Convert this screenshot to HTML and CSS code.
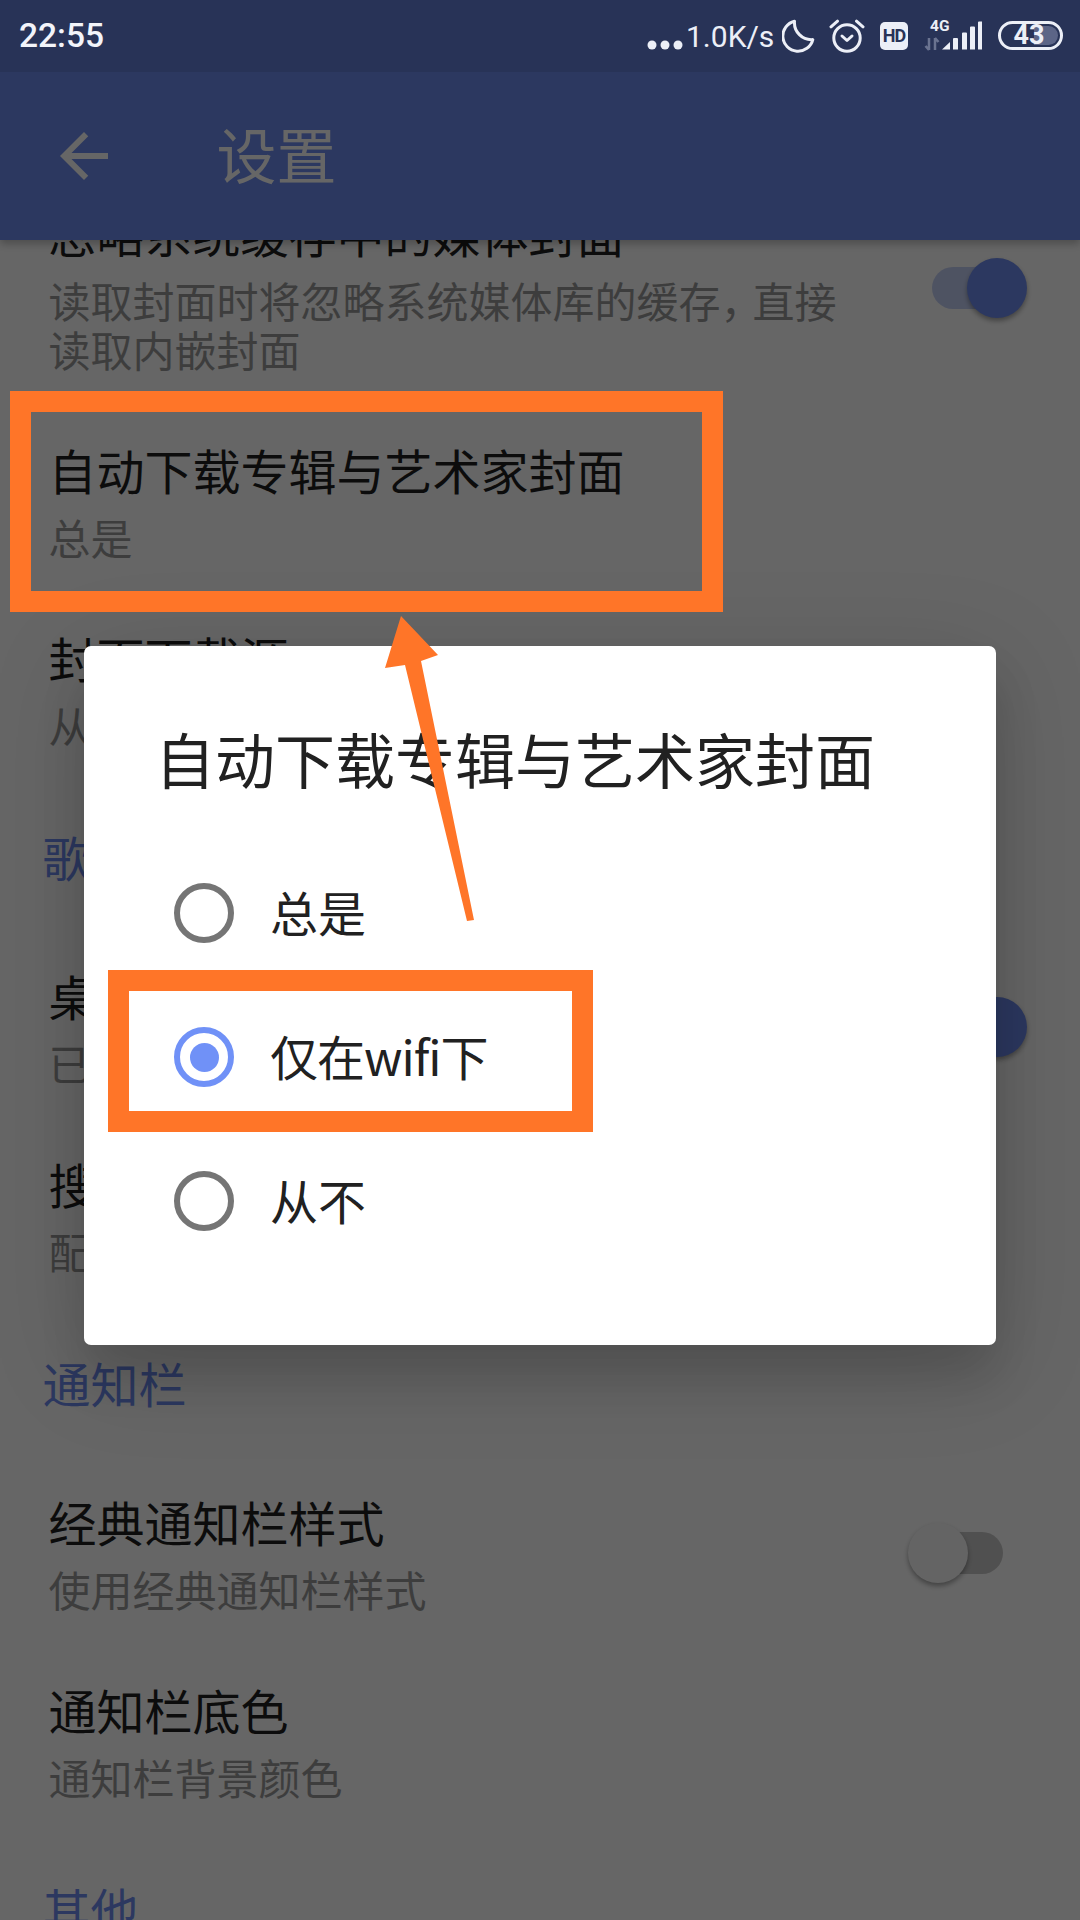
FILE: index.html
```html
<!DOCTYPE html>
<html lang="zh-CN">
<head>
<meta charset="utf-8">
<title>设置</title>
<link rel="stylesheet" href="styles.css">
</head>
<body>
<div class="phone">
  <div class="statusbar">
    <span class="time">22:55</span>
    <div class="status-right">
      <svg class="ic-dots" viewBox="0 0 36 12"><circle cx="5" cy="6" r="4.5"/><circle cx="18" cy="6" r="4.5"/><circle cx="31" cy="6" r="4.5"/></svg>
      <span class="speed">1.0K/s</span>
      <svg class="ic-moon" viewBox="0 0 33 34"><path d="M12.5 2.2A15.2 15.2 0 1 0 30.8 20.6 17 17 0 0 1 12.5 2.2Z"/></svg>
      <svg class="ic-alarm" viewBox="0 0 36 34"><circle cx="18" cy="19" r="13.2"/><path d="M13 17l5 4.5 5-4.5"/><path d="M2 7.8 8.5 2.2M27.5 2.2 34 7.8"/></svg>
      <span class="hd">HD</span>
      <svg class="ic-net" viewBox="0 0 58 32">
        <text class="ic-4g" x="5" y="12.3">4G</text>
        <path class="ic-arrows" d="M4 19v12M0.5 27 4 31M10 31V19M10 19l3.5 4"/>
        <path class="ic-bars" d="M17 30.5 25 23v7.5zM28 30.5V20a1 1 0 0 1 1-1h3a1 1 0 0 1 1 1v10.5zM37 30.5V14.500a1 1 0 0 1 1-1h3a1 1 0 0 1 1 1v16zM45 30.5V8.500a1 1 0 0 1 1-1h3a1 1 0 0 1 1 1v22zM53 30.5V3.500a1 1 0 0 1 1-1h3v28z"/>
      </svg>
      <div class="battery"><span class="battery-fill"></span><span class="battery-num">43</span></div>
    </div>
  </div>

  <header class="appbar">
    <svg class="back" viewBox="0 0 24 24"><path d="M20 11H7.830l5.590-5.590L12 4l-8 8 8 8 1.410-1.410L7.830 13H20v-2z"/></svg>
    <h1 class="appbar-title">设置</h1>
  </header>

  <main class="content">
    <div class="list">
      <div class="row">
        <div class="row-text">
          <div class="row-title">忽略系统缓存中的媒体封面</div>
          <div class="row-sub">读取封面时将忽略系统媒体库的缓存<span class="comma">，</span>直接读取内嵌封面</div>
        </div>
        <div class="switch on"><span class="track"></span><span class="thumb"></span></div>
      </div>
      <div class="row">
        <div class="row-text">
          <div class="row-title">自动下载专辑与艺术家封面</div>
          <div class="row-sub">总是</div>
        </div>
      </div>
      <div class="row">
        <div class="row-text">
          <div class="row-title">封面下载源</div>
          <div class="row-sub">从网络下载封面</div>
        </div>
      </div>
      <div class="section">歌词</div>
      <div class="row">
        <div class="row-text">
          <div class="row-title">桌面歌词</div>
          <div class="row-sub">已开启</div>
        </div>
        <div class="switch on"><span class="track"></span><span class="thumb"></span></div>
      </div>
      <div class="row">
        <div class="row-text">
          <div class="row-title">搜索歌词</div>
          <div class="row-sub">配置歌词搜索</div>
        </div>
      </div>
      <div class="section">通知栏</div>
      <div class="row">
        <div class="row-text">
          <div class="row-title">经典通知栏样式</div>
          <div class="row-sub">使用经典通知栏样式</div>
        </div>
        <div class="switch"><span class="track"></span><span class="thumb"></span></div>
      </div>
      <div class="row">
        <div class="row-text">
          <div class="row-title">通知栏底色</div>
          <div class="row-sub">通知栏背景颜色</div>
        </div>
      </div>
      <div class="section">其他</div>
    </div>
  </main>

  <div class="scrim"></div>

  <div class="dialog">
    <div class="dialog-title">自动下载专辑与艺术家封面</div>
    <div class="options">
      <div class="option"><span class="radio"></span><span class="option-label">总是</span></div>
      <div class="option"><span class="radio checked"><span class="dot"></span></span><span class="option-label option-label-latin">仅在wifi下</span></div>
      <div class="option"><span class="radio"></span><span class="option-label">从不</span></div>
    </div>
  </div>

  <div class="mark mark-row"></div>
  <div class="mark mark-option"></div>
  <svg class="mark-arrow" viewBox="0 0 1080 1920"><polygon points="401,616 438,655 421,661 474,920 467,921 405,665 385,668"/></svg>
</div>
</body>
</html>
```

FILE: styles.css
```css
* { box-sizing: border-box; }
html, body { margin: 0; padding: 0; }
body { width: 1080px; height: 1920px; overflow: hidden; background: #fff; font-family: "Noto Sans CJK SC", "Noto Sans", sans-serif; }

.phone { position: relative; width: 1080px; height: 1920px; overflow: hidden; display: flex; flex-direction: column; background: #fff; }

.statusbar { position: relative; z-index: 3; flex: none; height: 72px; background: #283357; color: #eceff7; display: flex; align-items: flex-start; justify-content: space-between; padding: 0 17px 0 19px; font-family: Roboto, "Liberation Sans", sans-serif; }
.time { font-size: 33.500px; font-weight: 500; line-height: 72px; color: #f2f4fa; }
.status-right { display: flex; align-items: flex-start; height: 72px; }
.ic-dots { width: 36px; height: 12px; margin-top: 39px; fill: #eceff7; }
.speed { margin-left: 3px; font-size: 30px; line-height: 73px; width: 88px; white-space: nowrap; }
.ic-moon { width: 33px; height: 34px; margin-top: 19px; margin-left: 8px; fill: none; stroke: #eceff7; stroke-width: 3; stroke-linejoin: round; }
.ic-alarm { width: 36px; height: 34px; margin-top: 19px; margin-left: 14px; fill: none; stroke: #eceff7; stroke-width: 3; stroke-linecap: round; stroke-linejoin: round; }
.hd { width: 28px; height: 28px; margin-top: 22px; margin-left: 15px; border-radius: 5px; background: #eceff7; color: #283357; font-size: 18px; font-weight: 700; letter-spacing: -1px; line-height: 28px; text-align: center; }
.ic-net { width: 58px; height: 32px; margin-top: 19px; margin-left: 17px; overflow: visible; }
.ic-4g { font-family: Roboto, sans-serif; font-size: 15.500px; font-weight: 700; fill: #eceff7; }
.ic-arrows { fill: none; stroke: #6a7390; stroke-width: 2.500; }
.ic-bars { fill: #eceff7; }
.battery { position: relative; width: 65px; height: 29px; margin-top: 21px; margin-left: 15px; border: 3px solid #eceff7; border-radius: 15px; display: flex; align-items: center; justify-content: center; }
.battery-fill { position: absolute; top: 2px; right: 2px; bottom: 2px; width: 24px; border-radius: 0 10px 10px 0; background: #5c6587; }
.battery-num { position: relative; font-size: 27px; font-weight: 700; line-height: 23px; margin-left: -3px; }

.appbar { position: relative; z-index: 1; flex: none; height: 168px; background: #6e8cf0; display: flex; align-items: center; box-shadow: 0 4px 8px rgba(0,0,0,.25); }
.back { width: 72px; height: 72px; margin-left: 48px; fill: #fff; }
.appbar-title { margin: 0 0 7px 96.500px; font-size: 60px; font-weight: 400; line-height: 76px; color: #fff; }

.content { flex: 1; min-height: 0; overflow: hidden; background: #fff; }
.list { margin-top: -70px; }
.row { min-height: 188px; padding: 29.500px 53px 34.500px 48.500px; display: flex; align-items: center; gap: 41.500px; }
.row-text { flex: 1; min-width: 0; }
.row-title { font-size: 48px; line-height: 65px; color: #1f1f1f; }
.row-sub { margin-top: 10px; font-size: 42px; line-height: 49px; color: #9a9a9a; }
.comma { letter-spacing: -10px; }
.section { height: 150px; padding: 38px 42.500px 0; font-size: 48px; line-height: 71px; color: #6e8cf0; }

.switch { position: relative; flex: none; width: 119px; height: 60px; margin-bottom: -4px; }
.track { position: absolute; left: 24px; top: 9px; width: 71px; height: 42px; border-radius: 21px; background: #c8c8c8; }
.thumb { position: absolute; left: 0; top: 0; width: 60px; height: 60px; border-radius: 50%; background: #fafafa; box-shadow: 0 3px 5px rgba(0,0,0,.35); }
.switch.on .track { background: #c4d0f5; }
.switch.on .thumb { left: 59px; background: #6e8cf0; }

.scrim { position: absolute; inset: 0; z-index: 2; background: rgba(0,0,0,.6); }

.dialog { position: absolute; z-index: 3; left: 84px; top: 646px; width: 912px; height: 699px; padding-top: 71.500px; background: #fff; border-radius: 7px; box-shadow: 0 33px 45px rgba(0,0,0,.12), 0 20px 100px rgba(0,0,0,.15); }
.dialog-title { padding-left: 71px; font-size: 60px; line-height: 80px; color: #212121; white-space: nowrap; }
.options { margin-top: 43.500px; }
.option { height: 144px; padding-left: 90px; display: flex; align-items: center; gap: 36px; }
.radio { flex: none; width: 60px; height: 60px; border: 6px solid #757575; border-radius: 50%; display: flex; align-items: center; justify-content: center; }
.radio.checked { border-color: #7091f7; }
.dot { width: 29px; height: 29px; border-radius: 50%; background: #7091f7; }
.option-label { margin-bottom: 5px; font-size: 48px; line-height: 60px; color: #212121; }
.option-label-latin { letter-spacing: -1px; }

.mark { position: absolute; z-index: 4; border: 21px solid #ff7528; }
.mark-row { left: 10px; top: 391px; width: 713px; height: 221px; }
.mark-option { left: 108px; top: 970px; width: 485px; height: 162px; }
.mark-arrow { position: absolute; z-index: 4; left: 0; top: 0; width: 1080px; height: 1920px; fill: #ff7528; pointer-events: none; }
```
